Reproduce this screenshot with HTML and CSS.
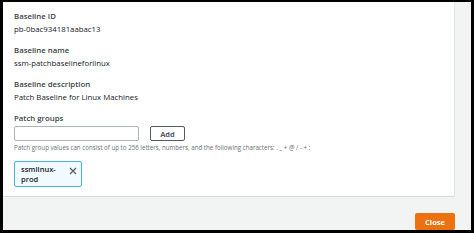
FILE: index.html
```html
<!DOCTYPE html>
<html lang="en">
<head>
  <meta charset="UTF-8">
  <title>Patch baseline</title>
  <link rel="stylesheet" href="styles.css">
</head>
<body>
  <div class="frame">
    <div class="top">
      <div class="panel">
        <div class="field">
          <div class="label">Baseline ID</div>
          <div class="value">pb-0bac934181aabac13</div>
        </div>
        <div class="field">
          <div class="label">Baseline name</div>
          <div class="value">ssm-patchbaselineforlinux</div>
        </div>
        <div class="field">
          <div class="label">Baseline description</div>
          <div class="value">Patch Baseline for Linux Machines</div>
        </div>
        <div class="field last">
          <div class="label">Patch groups</div>
          <div class="input-row">
            <input class="text-input" type="text">
            <button class="add-btn">Add</button>
          </div>
          <div class="hint">Patch group values can consist of up to 256 letters, numbers, and the following characters: . _ + @ / - + :</div>
        </div>
        <div class="token">
          <span class="token-text">ssmlinux-<br>prod</span>
          <svg class="token-x" width="8" height="8" viewBox="0 0 8 8">
            <path d="M1 1 L7 7 M7 1 L1 7" stroke="#545b64" stroke-width="1.2" fill="none"/>
          </svg>
        </div>
      </div>
      <div class="side"></div>
    </div>
    <div class="footer">
      <button class="close-btn">Close</button>
    </div>
  </div>
</body>
</html>
```

FILE: styles.css
```css
* {
  margin: 0;
  padding: 0;
  box-sizing: border-box;
}

body {
  background: #000;
  font-family: 'Open Sans', sans-serif;
  color: #16191f;
  width: 474px;
  height: 233px;
  padding: 2px 3px 3px 3px;
}

.frame {
  background: #f2f3f3;
  height: 228px;
  display: flex;
  flex-direction: column;
}

.top {
  display: flex;
  height: 195px;
}

.panel {
  width: 452px;
  background: #fff;
  border-bottom: 1px solid #d5dbdb;
  border-right: 1px solid #e3e6e6;
  padding: 9px 11px 0 11px;
}

.side {
  flex: 1;
}

.field {
  margin-bottom: 11px;
}

.field.last {
  margin-bottom: 9px;
}

.label {
  font-size: 7.8px;
  font-weight: 600;
  line-height: 10px;
  color: #3b3f45;
  margin-bottom: 3px;
}

.value {
  font-size: 7.8px;
  line-height: 10px;
  color: #16191f;
}

.input-row {
  display: flex;
  align-items: center;
  gap: 11px;
  margin-top: 2px;
}

.text-input {
  width: 125px;
  height: 15px;
  border: 1px solid #aab7b8;
  border-radius: 2px;
  background: #fff;
}

.add-btn {
  width: 35px;
  height: 15px;
  border: 1px solid #545b64;
  border-radius: 2px;
  background: #fff;
  font-family: 'Open Sans', sans-serif;
  font-size: 7.5px;
  font-weight: 700;
  color: #545b64;
}

.hint {
  font-size: 6.2px;
  line-height: 9px;
  color: #687078;
  margin-top: 2px;
  white-space: nowrap;
}

.token {
  width: 68px;
  height: 26px;
  background: #f1faff;
  border: 1px solid #44b9d6;
  border-radius: 2px;
  display: flex;
  justify-content: space-between;
  align-items: flex-start;
  padding: 2px 4px 0 6px;
}

.token-text {
  font-size: 7.5px;
  font-weight: 600;
  line-height: 10px;
  color: #16191f;
}

.token-x {
  margin-top: 3px;
}

.footer {
  flex: 1;
  display: flex;
  justify-content: flex-end;
  align-items: flex-end;
  padding-right: 16px;
}

.close-btn {
  width: 40px;
  height: 17px;
  background: #ec7211;
  border: none;
  border-radius: 2px;
  color: #fff;
  font-family: 'Open Sans', sans-serif;
  font-size: 7.5px;
  font-weight: 700;
}
```
